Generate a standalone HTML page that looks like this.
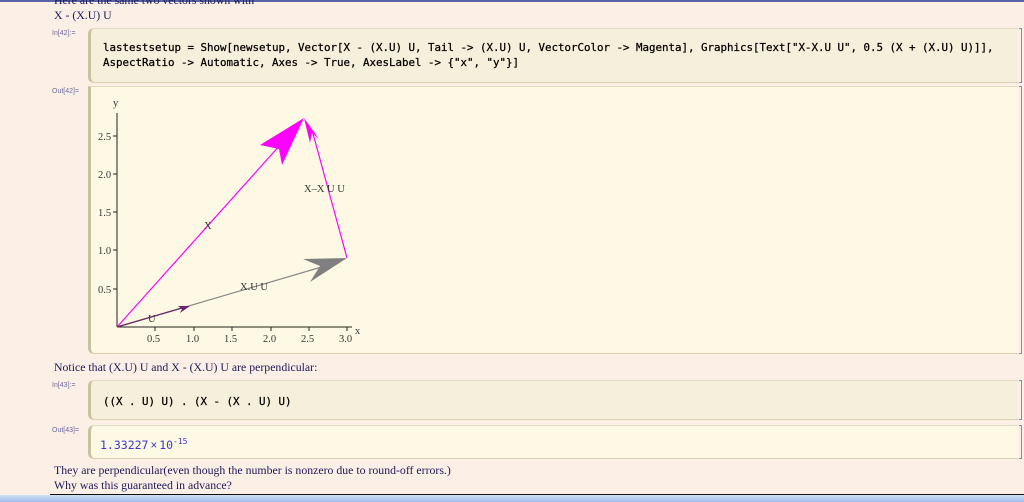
<!DOCTYPE html>
<html><head><style>
body{margin:0;width:1024px;height:502px;background:#fcefe5;position:relative;overflow:hidden;font-family:"Liberation Serif",serif;}
.t{position:absolute;color:#1a1a5a;font-size:11.8px;white-space:nowrap;}
.lab{position:absolute;font-family:"Liberation Sans",sans-serif;font-size:7px;color:#6a6aa0;}
.box{position:absolute;left:88px;right:6px;border-left:3px solid #c9c29a;border-bottom:1px solid #d8d0b0;border-top:1px solid #e2dcc0;border-top-left-radius:6px;border-bottom-left-radius:6px;}
.code{position:absolute;font-family:"DejaVu Sans Mono","Liberation Mono",monospace;font-size:10.8px;color:#000;white-space:pre;line-height:15px;-webkit-text-stroke:0.25px #000;}
.br{position:absolute;right:2px;width:2px;border:1px solid #8888bb;border-left:none;}
</style></head><body>
<div style="position:absolute;left:0;top:0;width:1024px;height:2px;background:#5b64a8"></div>
<div class="t" style="left:54px;top:-7px;">Here are the same two vectors shown with</div>
<div class="t" style="left:54px;top:8px;">X - (X.U) U</div>
<div class="lab" style="left:52px;top:30px;">In[42]:=</div>
<div class="box" style="top:28px;height:53px;background:#f5efdb;"></div>
<div class="code" style="left:103px;top:40px;">lastestsetup = Show[newsetup, Vector[X - (X.U) U, Tail -&gt; (X.U) U, VectorColor -&gt; Magenta], Graphics[Text["X-X.U U", 0.5 (X + (X.U) U)]],
AspectRatio -&gt; Automatic, Axes -&gt; True, AxesLabel -&gt; {"x", "y"}]</div>
<div class="br" style="top:28px;height:53px;"></div>
<div class="lab" style="left:52px;top:88px;">Out[42]=</div>
<div class="box" style="top:86px;height:266px;background:#fef9e4;border-top-left-radius:0;"></div>
<div class="br" style="top:86px;height:266px;"></div>
<svg style="position:absolute;left:0;top:0" width="1024" height="502">
<g font-family="Liberation Serif" font-size="10.5" fill="#333">
<line x1="117" y1="113" x2="117" y2="327" stroke="#222"/>
<line x1="117" y1="327" x2="352" y2="327" stroke="#222"/>
<text x="113" y="106">y</text>
<text x="355" y="334">x</text>
<g stroke="#222">
<line x1="113" y1="289" x2="117" y2="289"/><line x1="113" y1="250" x2="117" y2="250"/><line x1="113" y1="212" x2="117" y2="212"/><line x1="113" y1="174" x2="117" y2="174"/><line x1="113" y1="136" x2="117" y2="136"/>
<line x1="155" y1="327" x2="155" y2="331"/><line x1="194" y1="327" x2="194" y2="331"/><line x1="232" y1="327" x2="232" y2="331"/><line x1="271" y1="327" x2="271" y2="331"/><line x1="309" y1="327" x2="309" y2="331"/><line x1="347" y1="327" x2="347" y2="331"/>
</g>
<text x="98" y="293">0.5</text><text x="98" y="254">1.0</text><text x="98" y="216">1.5</text><text x="98" y="178">2.0</text><text x="98" y="140">2.5</text>
<text x="147" y="342">0.5</text><text x="186" y="342">1.0</text><text x="224" y="342">1.5</text><text x="263" y="342">2.0</text><text x="301" y="342">2.5</text><text x="339" y="342">3.0</text>
<line x1="117" y1="327" x2="290" y2="134" stroke="#f0f" stroke-width="1.2"/>
<polygon points="304,118 260,145 279,149 282,165" fill="#f0f"/>
<line x1="347" y1="258" x2="312" y2="130" stroke="#f0f" stroke-width="1.2"/>
<polygon points="304,118 310,143 312,133 319,139" fill="#f0f"/>
<line x1="117" y1="327" x2="325" y2="266" stroke="#888" stroke-width="1.2"/>
<polygon points="347,258 303,259 320,266 310,282" fill="#808080"/>
<line x1="117" y1="327" x2="182" y2="308" stroke="#6a2a6a" stroke-width="1.3"/>
<polygon points="190,306 178,306 182,309 180,313" fill="#702070"/>
<text x="204" y="229">X</text>
<text x="304" y="192">X–X U U</text>
<text x="240" y="290">X.U U</text>
<text x="148" y="322">U</text>
</g>
</svg>
<div class="t" style="left:54px;top:360px;">Notice that (X.U) U and X - (X.U) U are perpendicular:</div>
<div class="lab" style="left:52px;top:382px;">In[43]:=</div>
<div class="box" style="top:380px;height:38px;background:#f5efdb;"></div>
<div class="code" style="left:103px;top:394px;">((X . U) U) . (X - (X . U) U)</div>
<div class="br" style="top:380px;height:38px;"></div>
<div class="lab" style="left:52px;top:427px;">Out[43]=</div>
<div class="box" style="top:425px;height:32px;background:#fef9e4;"></div>
<div class="code" style="left:100px;top:434px;color:#3a3acc;-webkit-text-stroke:0;font-size:11.5px;">1.33227<span style="font-family:'Liberation Sans';padding:0 2px;">×</span>10<sup style="font-size:8px;">-15</sup></div>
<div class="br" style="top:425px;height:32px;"></div>
<div class="t" style="left:54px;top:463px;">They are perpendicular(even though the number is nonzero due to round-off errors.)</div>
<div class="t" style="left:54px;top:478px;">Why was this guaranteed in advance?</div>
<div style="position:absolute;left:50px;right:0;top:494px;height:1px;background:#111"></div>
<div style="position:absolute;left:0;right:0;top:495px;height:7px;background:linear-gradient(#cfe0f5,#9fbde8);"></div>
</body></html>
